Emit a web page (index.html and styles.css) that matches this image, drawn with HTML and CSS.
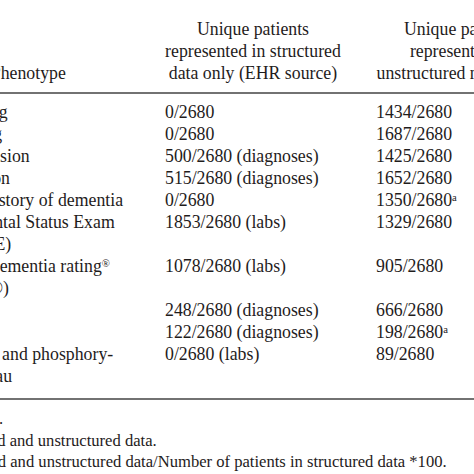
FILE: index.html
```html
<!DOCTYPE html>
<html lang="en">
<head>
<meta charset="utf-8">
<title>Phenotype coverage table</title>
<link rel="stylesheet" href="styles.css">
</head>
<body>
<div class="page">
  <table class="data">
    <thead>
      <tr>
        <th class="c1">Clinical Phenotype</th>
        <th class="c2">Unique patients<br>represented in structured<br>data only (EHR source)</th>
        <th class="c3">Unique patients<br>represented in<br>unstructured notes only</th>
      </tr>
    </thead>
    <tbody>
      <tr class="first">
        <td class="c1">Wandering</td>
        <td class="c2">0/2680</td>
        <td class="c3">1434/2680</td>
      </tr>
      <tr>
        <td class="c1">Repeating</td>
        <td class="c2">0/2680</td>
        <td class="c3">1687/2680</td>
      </tr>
      <tr>
        <td class="c1">Apprehension</td>
        <td class="c2">500/2680 (diagnoses)</td>
        <td class="c3">1425/2680</td>
      </tr>
      <tr>
        <td class="c1">Depression</td>
        <td class="c2">515/2680 (diagnoses)</td>
        <td class="c3">1652/2680</td>
      </tr>
      <tr>
        <td class="c1">Family history of dementia</td>
        <td class="c2">0/2680</td>
        <td class="c3">1350/2680<sup>a</sup></td>
      </tr>
      <tr>
        <td class="c1">Mini-Mental Status Exam<br>(MMSE)</td>
        <td class="c2">1853/2680 (labs)</td>
        <td class="c3">1329/2680</td>
      </tr>
      <tr>
        <td class="c1">Clinical dementia rating<sup>®</sup><br>(CDR®)</td>
        <td class="c2">1078/2680 (labs)</td>
        <td class="c3">905/2680</td>
      </tr>
      <tr>
        <td class="c1">Stroke</td>
        <td class="c2">248/2680 (diagnoses)</td>
        <td class="c3">666/2680</td>
      </tr>
      <tr>
        <td class="c1">Anxiety</td>
        <td class="c2">122/2680 (diagnoses)</td>
        <td class="c3">198/2680<sup>a</sup></td>
      </tr>
      <tr class="last">
        <td class="c1">Amyloid&nbsp; and phosphory-<br>lated Tau</td>
        <td class="c2">0/2680 (labs)</td>
        <td class="c3">89/2680</td>
      </tr>
    </tbody>
  </table>
  <div class="notes">
    <p>N = 2,680.</p>
    <p><sup>a</sup>Structured and unstructured data.</p>
    <p><sup>b</sup>Structured and unstructured data/Number of patients in structured data *100.</p>
  </div>
</div>
</body>
</html>
```

FILE: styles.css
```css
html, body {
  margin: 0;
  padding: 0;
  background: #ffffff;
  overflow: hidden;
}

body {
  width: 474px;
  height: 474px;
  color: #1f1c1c;
  font-family: "Liberation Serif", "Times New Roman", serif;
}

.page {
  width: 474px;
  overflow: hidden;
}

.data {
  margin: 18px 0 0 -70px;
  border-collapse: separate;
  border-spacing: 0;
  font-size: 17.8px;
  line-height: 22px;
}

.data th,
.data td {
  padding: 0;
  white-space: nowrap;
  vertical-align: top;
  font-weight: normal;
}

.data th {
  vertical-align: bottom;
  padding-bottom: 8px;
  border-bottom: 2px solid #727272;
}

.data .c1 {
  width: 235px;
  min-width: 235px;
  max-width: 235px;
  text-align: left;
  box-sizing: border-box;
}

.data td.c1 {
  padding-left: 17px;
  text-indent: -17px;
}

.data th.c1 {
  padding-left: 0;
}

.data .c2 {
  width: 176px;
  min-width: 176px;
  padding-right: 35px;
  text-align: left;
}

.data th.c2 {
  text-align: center;
}

.data .c3 {
  width: 168px;
  min-width: 168px;
  text-align: left;
}

.data th.c3 {
  text-align: center;
}

.data tr.first td {
  padding-top: 7px;
}

.data tr.last td {
  padding-bottom: 11px;
  border-bottom: 2px solid #727272;
}

.data sup,
.notes sup {
  font-size: 0.6em;
  line-height: 0;
  vertical-align: 0.5em;
}

.notes {
  margin: 8px 0 0 -68px;
  font-size: 16.6px;
  line-height: 21.5px;
  white-space: nowrap;
}

.notes p {
  margin: 0;
}
```
